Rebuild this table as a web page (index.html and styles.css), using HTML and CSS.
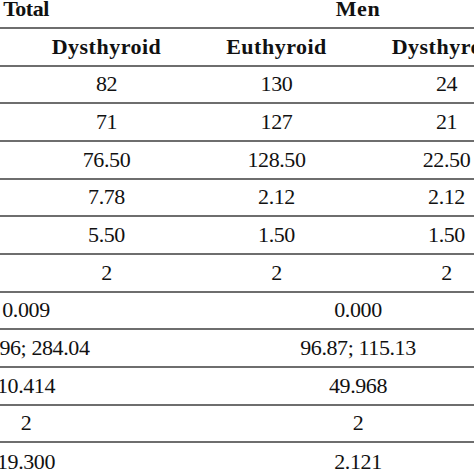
FILE: index.html
```html
<!DOCTYPE html>
<html>
<head>
<meta charset="utf-8">
<link rel="stylesheet" href="styles.css">
</head>
<body>
<div class="table">
  <div class="row head">
    <div class="cell span2 tight">Total</div>
    <div class="cell span2 men">Men</div>
  </div>
  <div class="row head">
    <div class="cell">Euthyroid</div>
    <div class="cell">Dysthyroid</div>
    <div class="cell">Euthyroid</div>
    <div class="cell">Dysthyroid</div>
  </div>
  <div class="row"><div class="cell"></div><div class="cell">82</div><div class="cell">130</div><div class="cell">24</div></div>
  <div class="row"><div class="cell"></div><div class="cell">71</div><div class="cell">127</div><div class="cell">21</div></div>
  <div class="row"><div class="cell"></div><div class="cell">76.50</div><div class="cell">128.50</div><div class="cell">22.50</div></div>
  <div class="row"><div class="cell"></div><div class="cell">7.78</div><div class="cell">2.12</div><div class="cell">2.12</div></div>
  <div class="row"><div class="cell"></div><div class="cell">5.50</div><div class="cell">1.50</div><div class="cell">1.50</div></div>
  <div class="row"><div class="cell"></div><div class="cell">2</div><div class="cell">2</div><div class="cell">2</div></div>
  <div class="row"><div class="cell span2">0.009</div><div class="cell span2 men">0.000</div></div>
  <div class="row"><div class="cell span2">179.96; 284.04</div><div class="cell span2 men">96.87; 115.13</div></div>
  <div class="row"><div class="cell span2">10.414</div><div class="cell span2 men">49.968</div></div>
  <div class="row"><div class="cell span2">2</div><div class="cell span2 men">2</div></div>
  <div class="row last"><div class="cell span2">19.300</div><div class="cell span2 men">2.121</div></div>
</div>
</body>
</html>
```
FILE: styles.css
```css
html, body {
  margin: 0;
  padding: 0;
  background: #ffffff;
  overflow: hidden;
  width: 474px;
  height: 474px;
}

.table {
  margin-top: -8.66px;
  margin-left: -139.5px;
  width: 760px;
  font-family: "Liberation Serif", "Times New Roman", serif;
  font-size: 22px;
  letter-spacing: -0.4px;
  color: #111111;
}

.row {
  display: grid;
  grid-template-columns: 161px 170px 170px 170px;
  height: 37.66px;
  box-sizing: border-box;
  border-bottom: 2px solid #6e6e6e;
}

.row.last {
  border-bottom: none;
}

.cell {
  display: flex;
  align-items: center;
  justify-content: center;
  white-space: nowrap;
}

.span2 {
  grid-column: span 2;
}

.men {
  padding-right: 7px;
}

.head .cell {
  font-weight: bold;
  letter-spacing: 0.5px;
}

.head .cell.tight {
  letter-spacing: -0.5px;
}
```
